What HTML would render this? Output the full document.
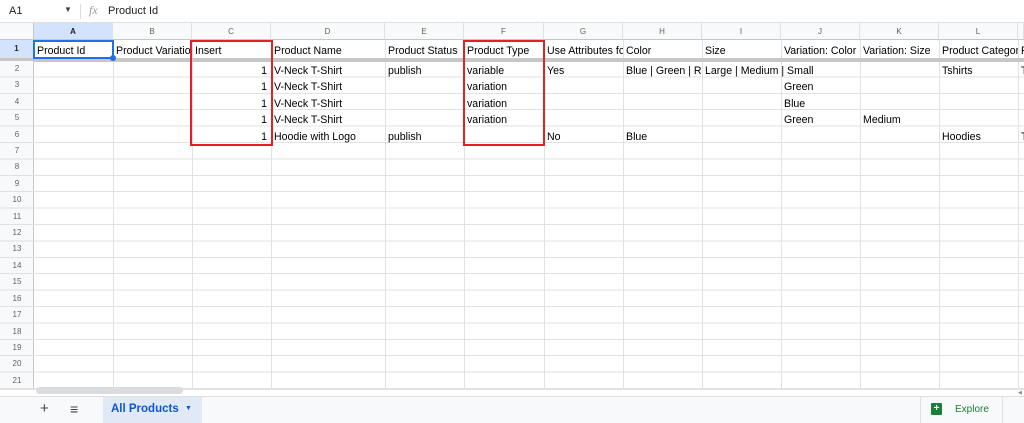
<!DOCTYPE html>
<html><head><meta charset="utf-8"><style>
*{margin:0;padding:0;box-sizing:border-box}
body{width:1024px;height:423px;overflow:hidden;background:#fff;font-family:"Liberation Sans",Arial,sans-serif;position:relative;color:#000}
.a{position:absolute}
.fb{left:0;top:0;width:1024px;height:23px;border-bottom:1px solid #e0e0e0;background:#fff}
.ch{top:23px;height:17px;background:#f8f9fa;border-bottom:1px solid #c7c7c7;font-size:8px;color:#5f6368;text-align:center;line-height:17px;border-right:1px solid #e0e0e0}
.rh{left:0;width:34px;background:#f8f9fa;font-size:8px;color:#5f6368;text-align:center;border-right:1px solid #c7c7c7;border-bottom:1px solid #e0e0e0}
.vl{width:1px;background:#e2e2e2;top:40px;height:349px}
.t{font-size:10.6px;white-space:nowrap;overflow:hidden;height:16px;line-height:16px;padding-left:3px;padding-top:2px;box-sizing:content-box}
.r{text-align:right;padding-right:4px}
.red{border:2px solid #e3202a}
</style></head><body>
<div class="a fb"></div>
<div class="a" style="left:9px;top:5px;font-size:11px;color:#202124">A1</div>
<div class="a" style="left:64px;top:5px;font-size:8px;color:#444">▼</div>
<div class="a" style="left:80px;top:4px;width:1px;height:15px;background:#ddd"></div>
<div class="a" style="left:89px;top:3px;font-size:12px;color:#999;font-style:italic;font-family:'Liberation Serif',serif">fx</div>
<div class="a" style="left:108px;top:5px;font-size:11px;color:#202124">Product Id</div>

<div class="a ch" style="left:0;width:34px;border-right:1px solid #c7c7c7"></div>
<div class="a ch" style="left:34px;width:79px;background:#d3e3fd;color:#202124;font-weight:bold">A</div>
<div class="a ch" style="left:113px;width:79px">B</div>
<div class="a ch" style="left:192px;width:79px">C</div>
<div class="a ch" style="left:271px;width:114px">D</div>
<div class="a ch" style="left:385px;width:79px">E</div>
<div class="a ch" style="left:464px;width:80px">F</div>
<div class="a ch" style="left:544px;width:79px">G</div>
<div class="a ch" style="left:623px;width:79px">H</div>
<div class="a ch" style="left:702px;width:79px">I</div>
<div class="a ch" style="left:781px;width:79px">J</div>
<div class="a ch" style="left:860px;width:79px">K</div>
<div class="a ch" style="left:939px;width:79px">L</div>
<div class="a ch" style="left:1018px;width:6px"></div>

<div class="a vl" style="left:113px"></div><div class="a vl" style="left:192px"></div><div class="a vl" style="left:271px"></div><div class="a vl" style="left:385px"></div><div class="a vl" style="left:464px"></div><div class="a vl" style="left:544px"></div><div class="a vl" style="left:623px"></div><div class="a vl" style="left:702px"></div><div class="a vl" style="left:781px"></div><div class="a vl" style="left:860px"></div><div class="a vl" style="left:939px"></div><div class="a vl" style="left:1018px"></div>
<div class="a" style="left:34px;top:61px;width:990px;height:328px;background:repeating-linear-gradient(to bottom,transparent 0,transparent 15.4px,#e2e2e2 15.4px,#e2e2e2 16.4px)"></div>
<div class="a" style="left:0;top:58px;width:1024px;height:4px;background:#c7c7c7"></div>

<div class="a rh" style="top:40px;height:18px;line-height:18px;background:#d3e3fd;color:#202124;font-weight:bold">1</div>
<div class="a" style="left:0;top:61px;width:34px;height:328px;background:#f8f9fa;border-right:1px solid #c7c7c7"></div>
<div class="a" style="left:0;top:61px;width:34px;font-size:8px;color:#5f6368;text-align:center;line-height:16.4px;background:repeating-linear-gradient(to bottom,transparent 0,transparent 15.4px,#e0e0e0 15.4px,#e0e0e0 16.4px)">2<br>3<br>4<br>5<br>6<br>7<br>8<br>9<br>10<br>11<br>12<br>13<br>14<br>15<br>16<br>17<br>18<br>19<br>20<br>21</div>

<div class="a" style="left:33px;top:40px;width:81px;height:19px;border:2px solid #1a73e8"></div>
<div class="a" style="left:110px;top:55px;width:6px;height:6px;border-radius:50%;background:#1a73e8"></div>
<div class="a t" style="left:34px;top:41px;width:76px">Product Id</div>
<div class="a t" style="left:113px;top:41px;width:76px">Product Variation</div>
<div class="a t" style="left:192px;top:41px;width:76px">Insert</div>
<div class="a t" style="left:271px;top:41px;width:111px">Product Name</div>
<div class="a t" style="left:385px;top:41px;width:76px">Product Status</div>
<div class="a t" style="left:464px;top:41px;width:77px">Product Type</div>
<div class="a t" style="left:544px;top:41px;width:76px">Use Attributes for</div>
<div class="a t" style="left:623px;top:41px;width:76px">Color</div>
<div class="a t" style="left:702px;top:41px;width:76px">Size</div>
<div class="a t" style="left:781px;top:41px;width:76px">Variation: Color</div>
<div class="a t" style="left:860px;top:41px;width:76px">Variation: Size</div>
<div class="a t" style="left:939px;top:41px;width:76px">Product Category</div>
<div class="a t" style="left:1018px;top:41px;width:3px">P</div>

<div class="a t r" style="left:192px;top:61px;width:72px">1</div>
<div class="a t r" style="left:192px;top:77.4px;width:72px">1</div>
<div class="a t r" style="left:192px;top:93.8px;width:72px">1</div>
<div class="a t r" style="left:192px;top:110.2px;width:72px">1</div>
<div class="a t r" style="left:192px;top:126.6px;width:72px">1</div>
<div class="a t" style="left:271px;top:61px;width:111px">V-Neck T-Shirt</div>
<div class="a t" style="left:271px;top:77.4px;width:111px">V-Neck T-Shirt</div>
<div class="a t" style="left:271px;top:93.8px;width:111px">V-Neck T-Shirt</div>
<div class="a t" style="left:271px;top:110.2px;width:111px">V-Neck T-Shirt</div>
<div class="a t" style="left:271px;top:126.6px;width:111px">Hoodie with Logo</div>
<div class="a t" style="left:385px;top:61px;width:76px">publish</div>
<div class="a t" style="left:385px;top:126.6px;width:76px">publish</div>
<div class="a t" style="left:464px;top:61px;width:77px">variable</div>
<div class="a t" style="left:464px;top:77.4px;width:77px">variation</div>
<div class="a t" style="left:464px;top:93.8px;width:77px">variation</div>
<div class="a t" style="left:464px;top:110.2px;width:77px">variation</div>
<div class="a t" style="left:544px;top:61px;width:76px">Yes</div>
<div class="a t" style="left:544px;top:126.6px;width:76px">No</div>
<div class="a t" style="left:623px;top:61px;width:76px">Blue | Green | Red</div>
<div class="a t" style="left:623px;top:126.6px;width:76px">Blue</div>
<div class="a t" style="left:702px;top:61px;width:155px">Large | Medium | Small</div>
<div class="a t" style="left:781px;top:77.4px;width:76px">Green</div>
<div class="a t" style="left:781px;top:93.8px;width:76px">Blue</div>
<div class="a t" style="left:781px;top:110.2px;width:76px">Green</div>
<div class="a t" style="left:860px;top:110.2px;width:76px">Medium</div>
<div class="a t" style="left:939px;top:61px;width:76px">Tshirts</div>
<div class="a t" style="left:939px;top:126.6px;width:76px">Hoodies</div>
<div class="a t" style="left:1018px;top:61px;width:3px">T</div>
<div class="a t" style="left:1018px;top:126.6px;width:3px">T</div>

<div class="a red" style="left:190px;top:40px;width:83px;height:106px"></div>
<div class="a red" style="left:463px;top:40px;width:82px;height:106px"></div>

<div class="a" style="left:0;top:389px;width:1024px;height:8px;background:#fff;border-top:1px solid #e2e2e2"></div>
<div class="a" style="left:36px;top:387px;width:147px;height:7px;border-radius:4px;background:#dadce0"></div>
<div class="a" style="left:1018px;top:390px;font-size:5px;color:#888">◀</div>

<div class="a" style="left:0;top:396px;width:1024px;height:27px;background:#f8f9fa;border-top:1px solid #e0e0e0"></div>
<div class="a" style="left:40px;top:400px;font-size:15px;color:#444">+</div>
<div class="a" style="left:70px;top:401px;font-size:14px;color:#444">≡</div>
<div class="a" style="left:103px;top:397px;width:99px;height:26px;background:#e1e9f7"></div>
<div class="a" style="left:111px;top:403px;font-size:11.5px;color:#0b57d0;font-weight:bold">All Products</div>
<div class="a" style="left:185px;top:405px;font-size:7px;color:#0b57d0">▼</div>
<div class="a" style="left:920px;top:397px;width:1px;height:26px;background:#e0e0e0"></div>
<div class="a" style="left:1002px;top:397px;width:1px;height:26px;background:#e0e0e0"></div>
<div class="a" style="left:931px;top:403px;width:11px;height:12px;background:#188038;border-radius:1px;color:#fff;font-size:10px;line-height:11px;text-align:center;font-weight:bold">+</div>
<div class="a" style="left:955px;top:404px;font-size:10px;color:#188038">Explore</div>
</body></html>
